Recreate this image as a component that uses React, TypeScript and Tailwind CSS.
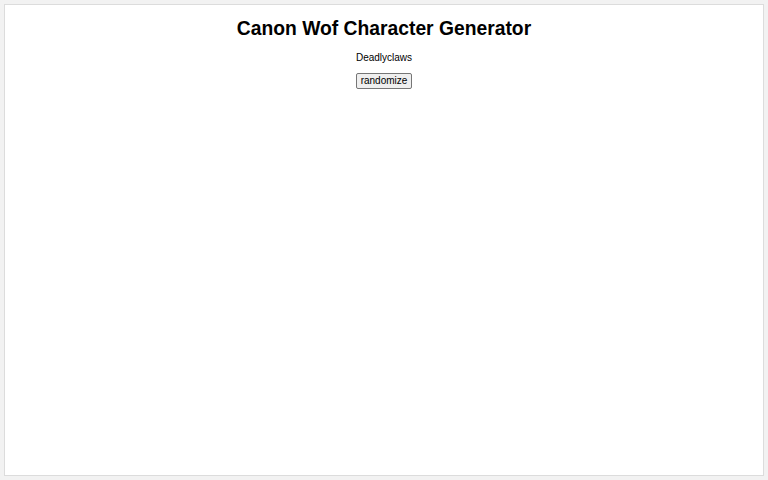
import React, { useState } from 'react';

const names = ['Deadlyclaws', 'Clay', 'Tsunami', 'Glory', 'Starflight', 'Sunny', 'Moonwatcher', 'Qibli'];

export default function App() {
  const [name, setName] = useState('Deadlyclaws');

  return (
    <div className="h-screen w-full bg-[#f2f2f2] p-[4px] font-['Liberation_Sans',Arial,sans-serif] text-black">
      <div className="h-full w-full bg-white border border-[#dcdcdc] flex flex-col items-center">
        <h1 className="mt-[13px] text-[19.3px] leading-[22px] font-bold">Canon Wof Character Generator</h1>
        <p className="mt-[12px] text-[10px] leading-[12px]">{name}</p>
        <button
          onClick={() => setName(names[Math.floor(Math.random() * names.length)])}
          className="mt-[9px] px-[3.5px] h-[16px] text-[10px] leading-[12px] bg-[#efefef] border border-[#767676] rounded-[2px]"
        >
          randomize
        </button>
      </div>
    </div>
  );
}
